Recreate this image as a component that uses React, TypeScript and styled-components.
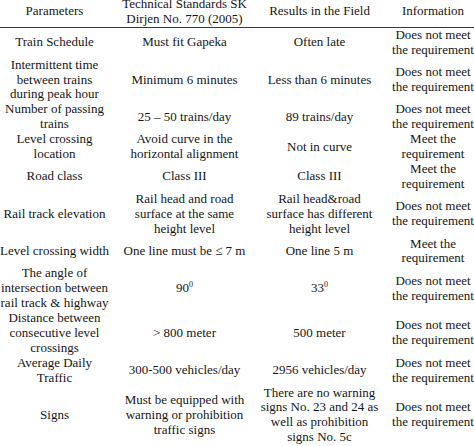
import React, { FC, ReactNode } from "react";
import styled, { createGlobalStyle } from "styled-components";

const GlobalStyle = createGlobalStyle`
  html, body {
    margin: 0;
    padding: 0;
    background: #ffffff;
    overflow: hidden;
  }
  body {
    font-family: "Liberation Serif", "Times New Roman", serif;
    color: #161616;
  }
`;

const Table = styled.div`
  display: grid;
  grid-template-columns: 121px 139px 131px 96px;
  margin-top: -3px;
  margin-left: -6px;
  width: 487px;
  font-size: 13px;
  line-height: 14.9px;
`;

const HeadCell = styled.div`
  display: flex;
  align-items: center;
  justify-content: center;
  text-align: center;
  white-space: nowrap;
  border-bottom: 1px solid #3a3a3a;
`;

const Cell = styled.div`
  display: flex;
  align-items: center;
  justify-content: center;
  text-align: center;
  white-space: nowrap;
`;

const Text = styled.span`
  display: block;
`;

const Sup = styled.sup`
  font-size: 8px;
  line-height: 0;
  vertical-align: 5px;
`;

type Row = [ReactNode, ReactNode, ReactNode, ReactNode];

const lines = (...parts: ReactNode[]) =>
  parts.map((p, i) => (
    <React.Fragment key={i}>
      {i > 0 && <br />}
      {p}
    </React.Fragment>
  ));

const NOT_MET = lines("Does not meet", "the requirement");
const MET = lines("Meet the", "requirement");

const rows: Row[] = [
  ["Train Schedule", "Must fit Gapeka", "Often late", NOT_MET],
  [
    lines("Intermittent time", "between trains", "during peak hour"),
    "Minimum 6 minutes",
    "Less than 6 minutes",
    NOT_MET,
  ],
  [
    lines("Number of passing", "trains"),
    "25 – 50 trains/day",
    "89 trains/day",
    NOT_MET,
  ],
  [
    lines("Level crossing", "location"),
    lines("Avoid curve in the", "horizontal alignment"),
    "Not in curve",
    MET,
  ],
  ["Road class", "Class III", "Class III", MET],
  [
    "Rail track elevation",
    lines("Rail head and road", "surface at the same", "height level"),
    lines("Rail head&road", "surface has different", "height level"),
    NOT_MET,
  ],
  ["Level crossing width", "One line must be ≤ 7 m", "One line 5 m", MET],
  [
    lines("The angle of", "intersection between", "rail track & highway"),
    <>
      90<Sup>0</Sup>
    </>,
    <>
      33<Sup>0</Sup>
    </>,
    NOT_MET,
  ],
  [
    lines("Distance between", "consecutive level", "crossings"),
    "> 800 meter",
    "500 meter",
    NOT_MET,
  ],
  [
    lines("Average Daily", "Traffic"),
    "300-500 vehicles/day",
    "2956 vehicles/day",
    NOT_MET,
  ],
  [
    "Signs",
    lines("Must be equipped with", "warning or prohibition", "traffic signs"),
    lines(
      "There are no warning",
      "signs No. 23 and 24 as",
      "well as prohibition",
      "signs No. 5c"
    ),
    NOT_MET,
  ],
];

const App: FC = () => {
  return (
    <>
      <GlobalStyle />
      <Table>
        <HeadCell>
          <Text>Parameters</Text>
        </HeadCell>
        <HeadCell>
          <Text>{lines("Technical Standards SK", "Dirjen No. 770 (2005)")}</Text>
        </HeadCell>
        <HeadCell>
          <Text>Results in the Field</Text>
        </HeadCell>
        <HeadCell>
          <Text>Information</Text>
        </HeadCell>
        {rows.map((row, r) =>
          row.map((content, c) => (
            <Cell key={`${r}-${c}`}>
              <Text>{content}</Text>
            </Cell>
          ))
        )}
      </Table>
    </>
  );
};

export default App;
